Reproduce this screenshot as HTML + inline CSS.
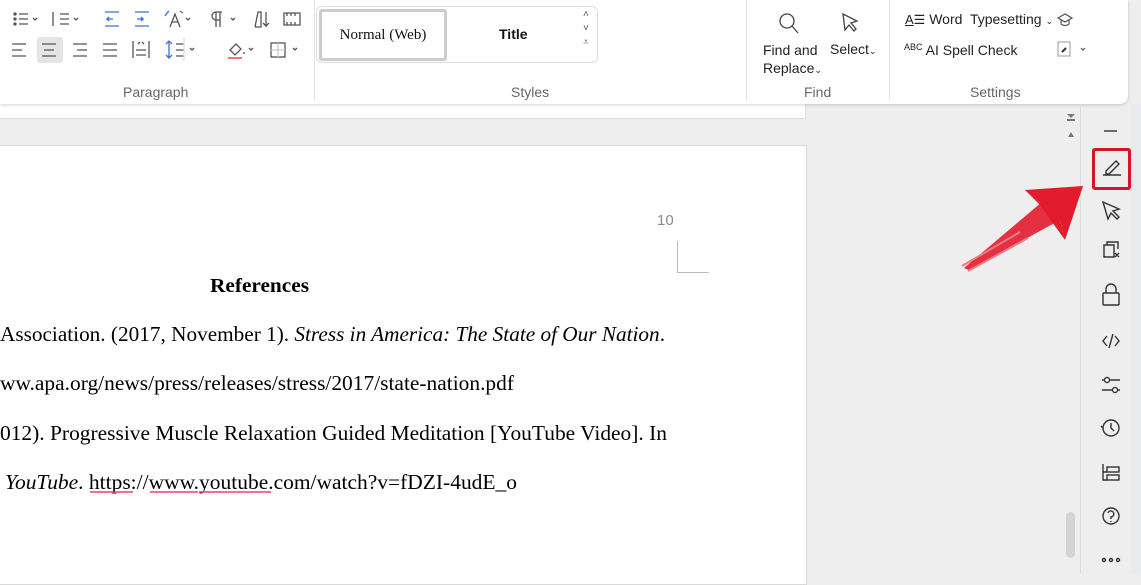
<!DOCTYPE html>
<html><head><meta charset="utf-8"><style>
*{margin:0;padding:0;box-sizing:border-box}
body{width:1141px;height:574px;overflow:hidden;background:#eeeeee;font-family:"Liberation Sans",sans-serif;position:relative;color:#333}
.abs{position:absolute}
.ribbon{left:0;top:0;width:1128px;height:104px;background:#fff;border-bottom-right-radius:8px;box-shadow:0 1px 3px rgba(0,0,0,.18)}
.lbl{font-size:14px;color:#666;top:84px}
.sep{width:1px;background:#e3e3e3;top:0;height:100px}
.t{font-size:14px;color:#222}
svg{position:absolute;overflow:visible}
</style></head><body>
<div class="abs" style="left:0;top:100px;width:806px;height:19px;background:#fff;border:1px solid #ddd;border-left:none"></div>
<div class="abs" style="left:0;top:145px;width:807px;height:440px;background:#fff;border:1px solid #d8d8d8;border-left:none"></div>
<div class="abs" style="left:657px;top:212px;font-size:15px;color:#888">10</div>
<div class="abs" style="left:677px;top:241px;width:32px;height:32px;border-left:1px solid #bbb;border-bottom:1px solid #bbb"></div>
<svg width="807" height="574" style="left:0;top:0" font-family="Liberation Serif, serif" font-size="21" fill="#000">
<text x="210" y="292" font-weight="bold" font-size="20" textLength="99" lengthAdjust="spacingAndGlyphs">References</text>
<text x="0" y="341" textLength="665" lengthAdjust="spacingAndGlyphs">Association. (2017, November 1). <tspan font-style="italic">Stress in America: The State of Our Nation</tspan>.</text>
<text x="0" y="390" textLength="514" lengthAdjust="spacingAndGlyphs">ww.apa.org/news/press/releases/stress/2017/state-nation.pdf</text>
<text x="0" y="440" textLength="667" lengthAdjust="spacingAndGlyphs">012). Progressive Muscle Relaxation Guided Meditation [YouTube Video]. In</text>
<text x="5" y="489" textLength="512" lengthAdjust="spacingAndGlyphs"><tspan font-style="italic">YouTube</tspan>. https://www.youtube.com/watch?v=fDZI-4udE_o</text>
<g stroke="#e8456b" stroke-width="1.5"><line x1="90" y1="492" x2="133" y2="492"/><line x1="150" y1="492" x2="198" y2="492"/><line x1="200" y1="492" x2="271" y2="492"/></g>
</svg>

<div class="abs ribbon"></div>
<svg width="310" height="70" style="left:0;top:0" stroke="#555" stroke-width="1.3" fill="none">
<g><circle cx="15" cy="14" r="1" fill="#555"/><circle cx="15" cy="19" r="1" fill="#555"/><circle cx="15" cy="24" r="1" fill="#555"/><path d="M19 14h9M19 19h9M19 24h9M33 18l2 2 2-2"/></g>
<g><path d="M53 12v14M60 14h9M60 19h9M60 24h9M74 18l2 2 2-2"/></g>
<g stroke="#3a6fd8"><path d="M105 12h14M105 26h14M113 19h-6l2-2M107 19l2 2"/></g>
<g stroke="#3a6fd8"><path d="M135 12h14M135 26h14M137 19h6l-2-2M143 19l-2 2"/></g>
<g><path d="M170 27l5-13 5 13M172 22h6"/><path d="M167 13l2-2M180 11l3 2M165 16l2-3" stroke="#3a6fd8"/><path d="M186 18l2 2 2-2"/></g>
<g><path d="M216 12v15M220 12v15M222 12h-6a4 4 0 0 0 0 8h4"/><path d="M231 18l2 2 2-2"/></g>
<g><path d="M255 27l3-15h3v15h-6M266 12v14l-3-3M266 26l3-3" /></g>
<g><path d="M284 13h16v12h-16zM287 13v3M291 13v3M295 13v3M287 25v-3M291 25v-3M295 25v-3"/></g>
<g><path d="M12 44h14M12 50h10M12 56h14"/></g>
<rect x="37" y="37" width="26" height="26" rx="3" fill="#e5e5e5" stroke="none"/>
<g><path d="M42 44h14M44 50h10M42 56h14"/></g>
<g><path d="M73 44h14M77 50h10M73 56h14"/></g>
<g><path d="M103 44h14M103 50h14M103 56h14"/></g>
<g><path d="M133 41v17M149 41v17M136 50h10M136 55h10M138 44l2-2M144 44l-2-2"/></g>
<g><path d="M169 41v17M166 44l3-3 3 3M166 55l3 3 3-3" stroke="#3a6fd8"/><path d="M176 44h8M176 50h8M176 56h8M190 48l2 2 2-2"/></g>
<path d="M184 37v24" stroke="#ddd"/>
<g><path d="M230 50l6-6 5 5-6 6zM244 52v2"/><path d="M228 58h14" stroke="#d33"/><path d="M249 48l2 2 2-2"/></g>
<g><rect x="271" y="43" width="14" height="14"/><path d="M278 43v14M271 50h14" stroke="#ccc"/><path d="M293 48l2 2 2-2"/></g>
</svg>
<div class="abs lbl" style="left:123px">Paragraph</div>
<div class="abs sep" style="left:314px"></div>
<div class="abs" style="left:316px;top:6px;width:282px;height:57px;border:1px solid #ddd;border-radius:6px"></div>
<div class="abs" style="left:319px;top:9px;width:128px;height:52px;border:3px solid #ccc;border-radius:3px;font-family:'Liberation Serif',serif;font-size:15px;color:#111;text-align:center;line-height:46px">Normal (Web)</div>
<div class="abs" style="left:499px;top:26px;font-size:14px;font-weight:bold;color:#111">Title</div>
<div class="abs" style="left:583px;top:8px;font-size:10px;color:#555;line-height:14px">˄<br>˅<br>⩡</div>
<div class="abs lbl" style="left:511px">Styles</div>
<div class="abs sep" style="left:746px"></div>
<svg width="120" height="40" style="left:760px;top:8px" stroke="#444" stroke-width="1.3" fill="none">
<circle cx="27" cy="13" r="7"/><path d="M32 18l6 7"/>
<path d="M83 6l14 7-6 2 5 6-2 2-5-6-4 5z"/>
</svg>
<div class="abs t" style="left:763px;top:41px;line-height:18px">Find and<br>Replace<span style="font-size:9px">⌄</span></div>
<div class="abs t" style="left:830px;top:41px">Select<span style="font-size:9px">⌄</span></div>
<div class="abs lbl" style="left:804px">Find</div>
<div class="abs sep" style="left:889px"></div>
<div class="abs t" style="left:905px;top:11px"><span style="text-decoration:underline;font-size:13px">A</span><span style="font-size:13px">☰</span> Word&nbsp; Typesetting <span style="font-size:9px">⌄</span></div>
<div class="abs t" style="left:904px;top:42px"><span style="font-size:9px;vertical-align:top">ABC</span> AI Spell Check</div>
<svg width="60" height="60" style="left:1055px;top:8px" stroke="#555" stroke-width="1.2" fill="none">
<path d="M3 10l7-4 7 4-7 4zM6 12v4c2 2 6 2 8 0v-4"/>
<rect x="3" y="34" width="12" height="14" stroke="#aaa"/><path d="M7 44l4-4" stroke="#333" stroke-width="2"/><path d="M26 40l2 2 2-2"/>
</svg>
<div class="abs lbl" style="left:970px">Settings</div>

<svg width="20" height="30" style="left:1063px;top:110px" fill="#777"><path d="M4 4h8l-4 4z"/><rect x="4" y="9" width="8" height="2"/><path d="M5 27l3-5 3 5z"/></svg>
<div class="abs" style="left:1066px;top:512px;width:9px;height:46px;background:#d4d4d4;border-radius:5px"></div>
<div class="abs" style="left:1080px;top:104px;width:1px;height:470px;background:#dcdcdc"></div>
<div class="abs" style="left:1131px;top:104px;width:10px;height:470px;background:#e9eaee"></div>
<div class="abs" style="left:1092px;top:148px;width:39px;height:42px;border:3px solid #d4142a;border-radius:3px"></div>
<svg width="40" height="460" style="left:1095px;top:110px" stroke="#333" stroke-width="1.4" fill="none">
<path d="M9 21h13"/>
<path d="M8 65h18M11 61l10-10 3 3-10 10h-3z"/>
<path d="M8 92l16 7-6 2 6 6-2 2-6-6-3 6z"/>
<path d="M9 135h10v12h-10zM12 135v-3h11v7M20 143l4 4M24 143l-4 4"/>
<rect x="8" y="183" width="16" height="12" rx="1"/><path d="M11 183v-4a5 5 0 0 1 10 0v4"/>
<path d="M12 226l-4 5 4 5M20 226l4 5-4 5M18 224l-4 14"/>
<path d="M7 270h18M7 280h18"/><circle cx="12" cy="270" r="2.5" fill="#fff"/><circle cx="20" cy="280" r="2.5" fill="#fff"/>
<circle cx="16" cy="318" r="8"/><path d="M16 313v5l3 3M8 318l-2-2"/>
<path d="M8 354v16h4M8 362h4"/><rect x="12" y="357" width="12" height="5"/><rect x="12" y="365" width="12" height="5"/>
<circle cx="16" cy="406" r="8"/><path d="M13 403a3 3 0 1 1 3 4v2M16 411v1"/>
<circle cx="9" cy="450" r="1.5"/><circle cx="16" cy="450" r="1.5"/><circle cx="23" cy="450" r="1.5"/>
</svg>
<svg width="141" height="100" style="left:960px;top:180px">
<path d="M65 10 L123 6 L105 60 L100 40 Z" fill="#e21b2d"/>
<path d="M65 10 L100 40 L105 60 L80 25 Z" fill="#e21b2d"/>
<path d="M4 88 L82 22 L100 40 L9 90 Z" fill="#e21b2d" opacity="0.9"/>
<path d="M2 86 L60 52 M8 91 L68 58" stroke="#ee7a85" stroke-width="2"/>
</svg>
</body></html>
